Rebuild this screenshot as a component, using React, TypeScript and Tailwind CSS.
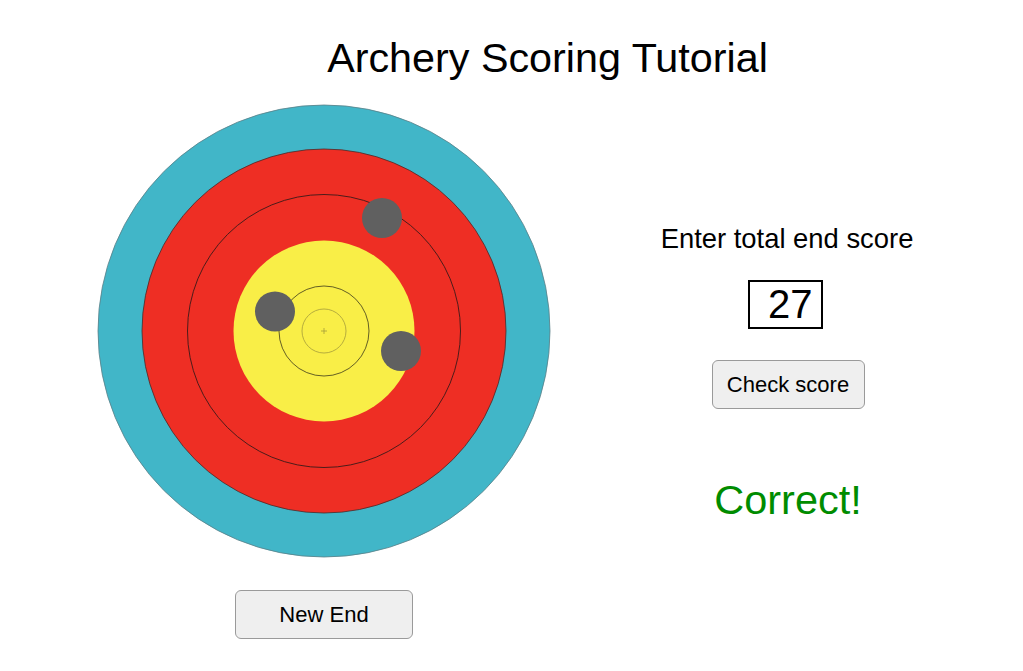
import { useState } from 'react'

const arrows = [
  { x: 382, y: 218.5 },
  { x: 275, y: 312 },
  { x: 401, y: 351.5 },
]

function Target() {
  // target centre on page is (324, 331.5), svg origin at (96, 103.5)
  const cx = 228
  const cy = 228
  return (
    <svg width={456} height={456} viewBox="0 0 456 456" className="block">
      <circle cx={cx} cy={cy} r={226} fill="#41b6c8" stroke="#5b7f86" strokeWidth={0.8} />
      <circle cx={cx} cy={cy} r={182} fill="#ee2e24" stroke="#4a2a28" strokeWidth={0.8} />
      <circle cx={cx} cy={cy} r={136.5} fill="none" stroke="#3a1a18" strokeWidth={0.9} />
      <circle cx={cx} cy={cy} r={90.5} fill="#f9ee47" />
      <circle cx={cx} cy={cy} r={45} fill="none" stroke="#3d3a1a" strokeWidth={0.8} />
      <circle cx={cx} cy={cy} r={22} fill="none" stroke="#a59c3a" strokeWidth={0.8} />
      <line x1={cx - 3} y1={cy} x2={cx + 3} y2={cy} stroke="#a59c3a" strokeWidth={0.8} />
      <line x1={cx} y1={cy - 3} x2={cx} y2={cy + 3} stroke="#a59c3a" strokeWidth={0.8} />
      {arrows.map((a, i) => (
        <circle key={i} cx={a.x - 96} cy={a.y - 103.5} r={20} fill="#606060" />
      ))}
    </svg>
  )
}

export default function App() {
  const [score, setScore] = useState('27')

  return (
    <div className="w-[1023px] h-[671px] bg-white text-black font-['Liberation_Sans',Arial,sans-serif]">
      <h1 className="pt-[34px] pl-[72px] text-center text-[41.3px] leading-[48px] font-normal">
        Archery Scoring Tutorial
      </h1>

      <div className="flex mt-[21px]">
        {/* Target */}
        <div className="ml-[96px] w-[456px] flex flex-col items-center">
          <Target />
          <button className="mt-[31px] w-[178px] h-[49px] rounded-[6px] border border-[#9a9a9a] bg-[#efefef] text-[22px]">
            New End
          </button>
        </div>

        {/* Scoring */}
        <div className="ml-[48px] w-[376px] flex flex-col items-center pt-[120px]">
          <p className="text-[27.4px] leading-[32px] mr-[2px]">Enter total end score</p>
          <input
            value={score}
            onChange={(e) => setScore(e.target.value)}
            className="mt-[25px] mr-[5px] w-[75px] h-[49px] border-2 border-black pl-[18px] text-[40px] leading-[45px] outline-none"
          />
          <button className="mt-[31px] w-[153px] h-[49px] rounded-[6px] border border-[#9a9a9a] bg-[#efefef] text-[22px]">
            Check score
          </button>
          <p className="mt-[67px] text-[41.5px] leading-[48px] text-[#008c00]">Correct!</p>
        </div>
      </div>
    </div>
  )
}
